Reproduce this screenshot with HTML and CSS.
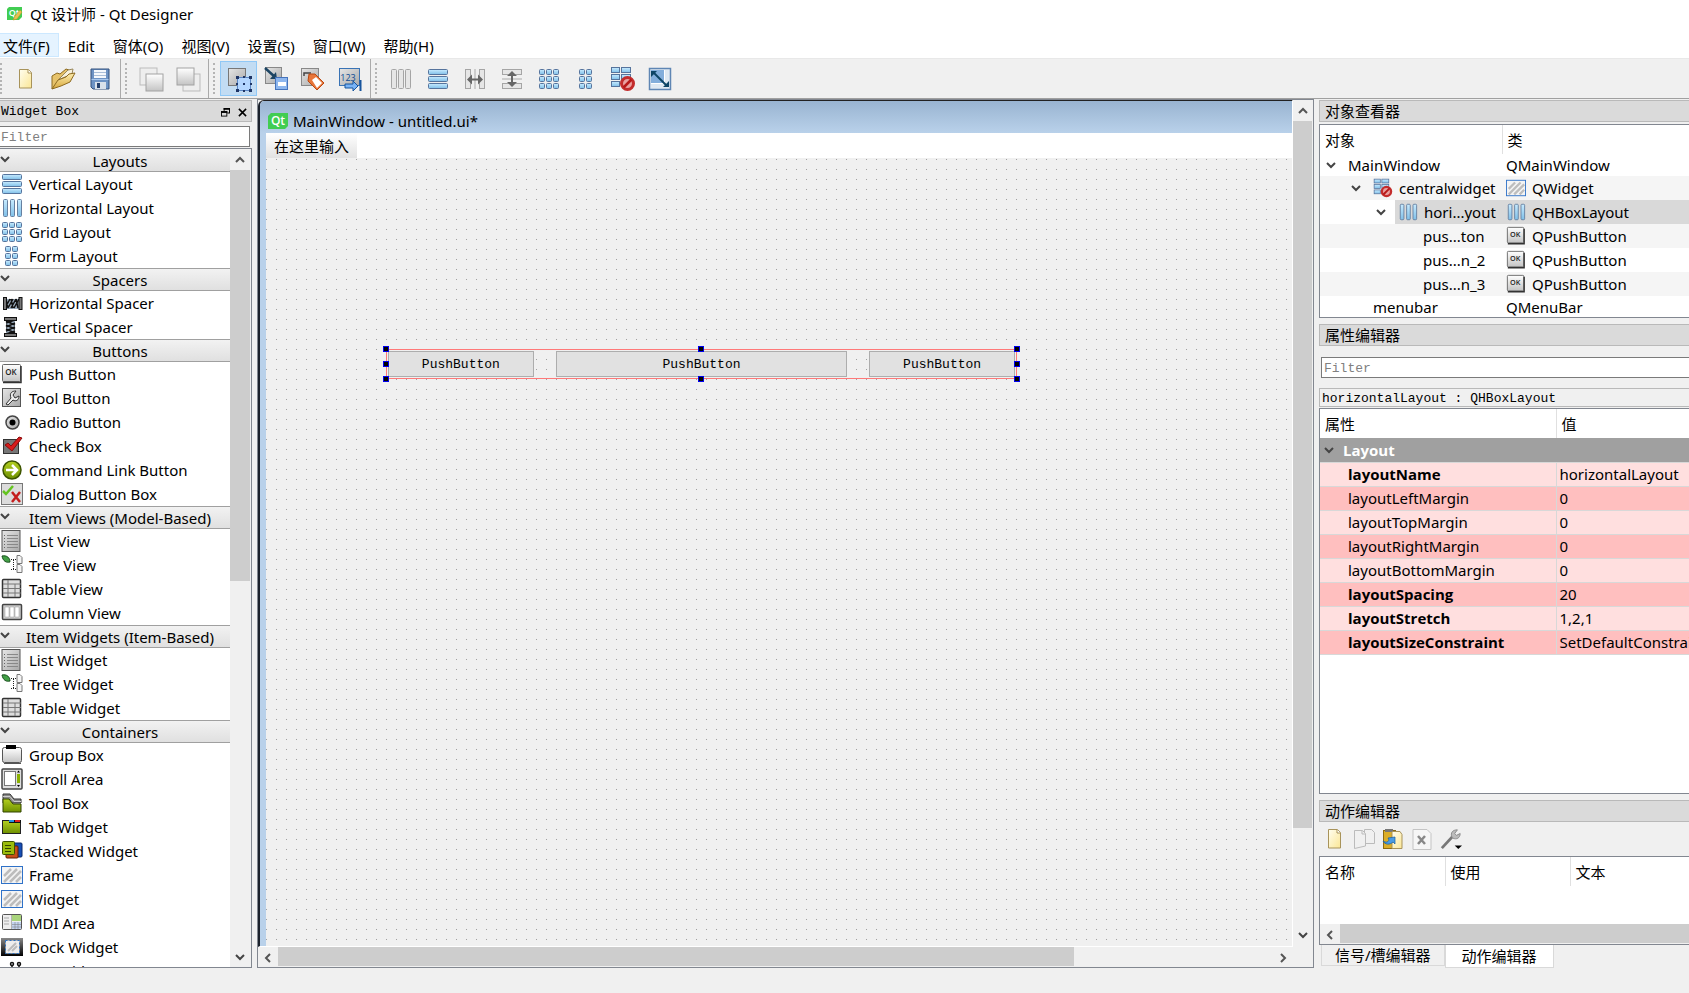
FILE: index.html
```html
<!DOCTYPE html>
<html lang="zh-CN">
<head>
    <meta charset="UTF-8">
    <meta name="viewport" content="width=device-width, initial-scale=1.0">
    <title>Qt 设计师 - Qt Designer</title>
    <link rel="stylesheet" href="styles.css">
</head>
<body>
    <!-- icon sprite -->
    <svg class="sprite" aria-hidden="true">
        <defs>
            <linearGradient id="blue" x1="0" y1="0" x2="0" y2="1"><stop offset="0" stop-color="#c8ebff"/><stop offset="1" stop-color="#7fbfe8"/></linearGradient>
            <linearGradient id="gray" x1="0" y1="0" x2="1" y2="1"><stop offset="0" stop-color="#e6e6e6"/><stop offset="1" stop-color="#a8a8a8"/></linearGradient>
            <linearGradient id="light" x1="0" y1="0" x2="0" y2="1"><stop offset="0" stop-color="#ffffff"/><stop offset="1" stop-color="#c4c4c4"/></linearGradient>
            <linearGradient id="paper" x1="0" y1="0" x2="1" y2="1"><stop offset="0" stop-color="#fffef0"/><stop offset="1" stop-color="#fbe695"/></linearGradient>
            <linearGradient id="gold" x1="0" y1="0" x2="0" y2="1"><stop offset="0" stop-color="#fdeeb0"/><stop offset="1" stop-color="#d8a83c"/></linearGradient>
            <linearGradient id="green" x1="0" y1="0" x2="0" y2="1"><stop offset="0" stop-color="#b4d020"/><stop offset="1" stop-color="#6e9000"/></linearGradient>
            <linearGradient id="dark" x1="0" y1="0" x2="0" y2="1"><stop offset="0" stop-color="#888"/><stop offset="1" stop-color="#000"/></linearGradient>
        </defs>
        <symbol id="down" viewBox="0 0 12 12"><path d="M2 4l4 4 4-4" fill="none" stroke="#444" stroke-width="2"/></symbol>
        <symbol id="up" viewBox="0 0 12 12"><path d="M2 8l4-4 4 4" fill="none" stroke="#555" stroke-width="2"/></symbol>
        <symbol id="left" viewBox="0 0 12 12"><path d="M8 2L4 6l4 4" fill="none" stroke="#555" stroke-width="2"/></symbol>
        <symbol id="right" viewBox="0 0 12 12"><path d="M4 2l4 4-4 4" fill="none" stroke="#555" stroke-width="2"/></symbol>
        <symbol id="new" viewBox="0 0 22 22"><path d="M4.500 1.500h9l3 3v15.500h-12z" fill="url(#paper)" stroke="#a8935a"/><path d="M13 1.500v3.500h3.500" fill="#fff" stroke="#a8935a"/></symbol>
        <symbol id="open" viewBox="0 0 26 24"><path d="M2 22V9l5-3 3 1 6-5 3 1v5" fill="#e6c26a" stroke="#8d6a20"/><path d="M8 13L18 3l5-1-1 5z" fill="#f6f0dc" stroke="#99875a"/><path d="M2 22l6-9 8-3 3-3 6-1-5 9-9 4z" fill="url(#gold)" stroke="#8d6a20"/></symbol>
        <symbol id="save" viewBox="0 0 22 22"><path d="M2 1h18v20H4l-2-2z" fill="#6d93c4" stroke="#33507c"/><rect x="5" y="2" width="12" height="8" fill="#f4f8fc"/><path d="M5 4.500h12M5 7.500h12" stroke="#a9bed8"/><rect x="6" y="14" width="11" height="7" fill="#d9e1ea"/><rect x="8" y="15" width="3" height="5" fill="#233f6c"/><path d="M2.500 11.500h17" stroke="#a8c8ee"/></symbol>
        <symbol id="front" viewBox="0 0 26 26"><rect x="2" y="2" width="17" height="17" fill="#eee" stroke="#bbb"/><rect x="8" y="8" width="17" height="17" fill="url(#light)" stroke="#a2a2a2"/></symbol>
        <symbol id="back" viewBox="0 0 26 26"><rect x="8" y="8" width="17" height="17" fill="#eee" stroke="#bbb"/><rect x="2" y="2" width="17" height="17" fill="url(#light)" stroke="#a2a2a2"/></symbol>
        <symbol id="edit-widgets" viewBox="0 0 26 26"><rect x="2.500" y="2.500" width="17" height="17" fill="url(#gray)" stroke="#777"/><rect x="11.500" y="11.500" width="13" height="13" fill="#b4d6ff" stroke="#5b86c4"/><path d="M10 10h3v3h-3zM17 10h2v2h-2zM23 10h3v3h-3zM10 17h2v2h-2zM24 17h2v2h-2zM10 23h3v3h-3zM17 24h2v2h-2zM23 23h3v3h-3zM17 17h2v2h-2z" fill="#1f3565"/></symbol>
        <symbol id="edit-signals" viewBox="0 0 26 26"><rect x="2.500" y="1.500" width="16" height="16" fill="url(#gray)" stroke="#888"/><path d="M2 2l10 9" stroke="#1d4563" stroke-width="2.500"/><path d="M14 13H7l6-7z" fill="#1d4563"/><rect x="12.500" y="11.500" width="12" height="12" fill="#8db6ee" stroke="#4573bb"/><rect x="15" y="16" width="8" height="4" fill="#fff"/></symbol>
        <symbol id="edit-buddies" viewBox="0 0 26 26"><rect x="1.500" y="2.500" width="17" height="17" fill="url(#gray)" stroke="#888"/><path d="M4 10V7h7" fill="none" stroke="#444" stroke-width="1.500"/><path d="M9 8h6l9 9-7 7-9-9z" fill="#e8763a" stroke="#ba4912"/><path d="M12 14l4-3 6 6-5 5z" fill="#fff"/></symbol>
        <symbol id="edit-tab" viewBox="0 0 26 26"><rect x="2.500" y="2.500" width="20" height="17" fill="url(#gray)" stroke="#3973b5"/><path d="M8 18h8v-3l5 5-5 5v-3H8z" fill="#79b3f5" stroke="#17549d"/><path d="M23.500 14v11" stroke="#17549d" stroke-width="2"/></symbol>
        <symbol id="hlay" viewBox="0 0 22 22"><g fill="url(#blue)" stroke="#6680a0"><rect x="2.500" y="2.500" width="4" height="17" rx="1"/><rect x="9.500" y="2.500" width="4" height="17" rx="1"/><rect x="16.500" y="2.500" width="4" height="17" rx="1"/></g></symbol>
        <symbol id="hlay-off" viewBox="0 0 22 22"><g fill="#e6e6e6" stroke="#a5a5a5"><rect x="1.500" y="1.500" width="5" height="19" rx="1"/><rect x="8.500" y="1.500" width="5" height="19" rx="1"/><rect x="15.500" y="1.500" width="5" height="19" rx="1"/></g></symbol>
        <symbol id="vlay" viewBox="0 0 22 22"><g fill="url(#blue)" stroke="#56749d"><rect x="1.500" y="1.500" width="19" height="5" rx="1"/><rect x="1.500" y="8.500" width="19" height="5" rx="1"/><rect x="1.500" y="15.500" width="19" height="5" rx="1"/></g></symbol>
        <symbol id="hsplit" viewBox="0 0 22 22"><g fill="#e6e6e6" stroke="#a5a5a5"><rect x="1.500" y="1.500" width="5" height="19"/><rect x="15.500" y="1.500" width="5" height="19"/></g><path d="M11 1v20" stroke="#aaa"/><path d="M3 11.500l5-5v4h6v-4l5 5-5 5v-4H8v4z" fill="#666"/></symbol>
        <symbol id="vsplit" viewBox="0 0 22 22"><g fill="#e6e6e6" stroke="#a5a5a5"><rect x="1.500" y="1.500" width="19" height="5"/><rect x="1.500" y="15.500" width="19" height="5"/></g><path d="M1 11h20" stroke="#aaa"/><path d="M11 3l5 5h-4v6h4l-5 5-5-5h4V8H6z" fill="#666"/></symbol>
        <symbol id="grid" viewBox="0 0 22 22"><g fill="url(#blue)" stroke="#56749d"><rect x="1.500" y="1.500" width="5" height="5" rx="1"/><rect x="8.500" y="1.500" width="5" height="5" rx="1"/><rect x="15.500" y="1.500" width="5" height="5" rx="1"/><rect x="1.500" y="8.500" width="5" height="5" rx="1"/><rect x="8.500" y="8.500" width="5" height="5" rx="1"/><rect x="15.500" y="8.500" width="5" height="5" rx="1"/><rect x="1.500" y="15.500" width="5" height="5" rx="1"/><rect x="8.500" y="15.500" width="5" height="5" rx="1"/><rect x="15.500" y="15.500" width="5" height="5" rx="1"/></g></symbol>
        <symbol id="form" viewBox="0 0 22 22"><g fill="url(#blue)" stroke="#56749d"><rect x="4.500" y="1.500" width="5" height="5" rx="1"/><rect x="11.500" y="1.500" width="5" height="5" rx="1"/><rect x="4.500" y="8.500" width="5" height="5" rx="1"/><rect x="11.500" y="8.500" width="5" height="5" rx="1"/><rect x="4.500" y="15.500" width="5" height="5" rx="1"/><rect x="11.500" y="15.500" width="5" height="5" rx="1"/></g></symbol>
        <symbol id="break" viewBox="0 0 26 26"><g fill="url(#blue)" stroke="#56749d"><rect x="1.500" y="1.500" width="8" height="5"/><rect x="11.500" y="1.500" width="9" height="5"/><rect x="1.500" y="8.500" width="8" height="5"/><rect x="11.500" y="8.500" width="9" height="5"/><rect x="1.500" y="15.500" width="8" height="5"/></g><circle cx="17.500" cy="17.500" r="6" fill="#e9a0a0" stroke="#c32c2c" stroke-width="3"/><path d="M13.500 21.500l8-8" stroke="#b81818" stroke-width="2.500"/></symbol>
        <symbol id="adjust" viewBox="0 0 26 26"><rect x="2.500" y="2.500" width="21" height="21" fill="#dfe9f2" stroke="#5f86b4" stroke-width="1.500"/><rect x="4" y="4" width="13" height="13" fill="#83aedb"/><path d="M17.500 4v13.500H4" fill="none" stroke="#fff"/><path d="M7 7l13 13" stroke="#0d4565" stroke-width="2"/><path d="M4 5h6l-6 6zM22 21h-6l6-6z" fill="#0d4565"/></symbol>
        <symbol id="hspace" viewBox="0 0 22 22"><path d="M4 7h14v10H4z" fill="#9ab"/><path d="M4 16l5-9M7 16l5-9M10 16l5-9M13 16l5-9M5 7l2 9M10 7l2 9M15 7l2 9" fill="none" stroke="#111" stroke-width="1.500"/><rect x="2.500" y="5.500" width="3" height="12" fill="#777" stroke="#111"/><rect x="18" y="5.500" width="3" height="12" fill="#777" stroke="#111"/></symbol>
        <symbol id="vspace" viewBox="0 0 22 22"><path d="M5 4h9v14H5z" fill="#9ab"/><path d="M5 7l9-3M5 11l9-4M5 15l9-4M5 18l9-3M5 5l9 4M5 9l9 4M5 13l9 4" fill="none" stroke="#111" stroke-width="1.500"/><rect x="3.500" y="1.500" width="12" height="3" fill="#777" stroke="#111"/><rect x="3.500" y="17.500" width="12" height="3" fill="#777" stroke="#111"/></symbol>
        <symbol id="ok" viewBox="0 0 22 22"><rect x="1.500" y="1.500" width="18" height="17" rx="1" fill="url(#light)" stroke="#666"/><path d="M2 19.500h18V3" fill="none" stroke="#333" stroke-width="1.500"/></symbol>
        <symbol id="tool" viewBox="0 0 22 22"><rect x="1.500" y="1.500" width="18" height="18" fill="url(#gray)" stroke="#555"/><path d="M5 17l5-6c-2-5 1-7 5-7l-3 4 2 3 4-2c0 4-3 6-6 4l-5 5z" fill="#eee" stroke="#333"/></symbol>
        <symbol id="radio" viewBox="0 0 22 22"><circle cx="11.500" cy="11.500" r="6.500" fill="url(#gray)" stroke="#444" stroke-width="1.500"/><circle cx="11.500" cy="11.500" r="3"/></symbol>
        <symbol id="check" viewBox="0 0 22 22"><rect x="2.500" y="4.500" width="15" height="14" fill="#777" stroke="#333"/><path d="M4 10l3-2 3 3 8-9 3 1-10 13z" fill="#d81c1c" stroke="#8b0b0b"/></symbol>
        <symbol id="command" viewBox="0 0 22 22"><circle cx="11" cy="11" r="9" fill="url(#green)" stroke="#3d5400" stroke-width="1.500"/><path d="M5 11h11M11 6l5 5-5 5" fill="none" stroke="#fff" stroke-width="2.500"/></symbol>
        <symbol id="dialog" viewBox="0 0 22 22"><rect x=".5" y=".5" width="21" height="21" fill="#dcdcdc" stroke="#777"/><path d="M2 8l3 3 7-8" fill="none" stroke="#64c420" stroke-width="2.500"/><path d="M11 9l8 10M19 9l-8 10" stroke="#c41d1d" stroke-width="2.500"/></symbol>
        <symbol id="list" viewBox="0 0 22 22"><rect x="1" y=".5" width="18" height="21" fill="url(#gray)" stroke="#555"/><path d="M6 5.500h11M6 8.500h11M6 11.500h11M6 14.500h11M6 17.500h11" stroke="#888"/><path d="M3.500 5v14" stroke="#666" stroke-dasharray="1 2"/></symbol>
        <symbol id="tree" viewBox="0 0 22 22"><path d="M1 2c5-1 8 2 8 6-4 1-7-1-8-6z" fill="#43a047" stroke="#164d1a"/><path d="M10 5.500h5M12.500 6v9M10 15.500h5" stroke="#222" stroke-dasharray="1 1"/><g fill="#f4f4f4" stroke="#777"><path d="M16 1.500h3l2 2v6h-5zM16 10.500h3l2 2v6h-5z"/></g></symbol>
        <symbol id="table" viewBox="0 0 22 22"><rect x="1.500" y="1.500" width="18" height="18" rx="1" fill="#ddd" stroke="#333" stroke-width="1.500"/><path d="M2 6h18M2 10.500h18M2 15h18M7 2v17M14 6v13" stroke="#777"/></symbol>
        <symbol id="column" viewBox="0 0 22 22"><rect x="1.500" y="2.500" width="19" height="15" rx="1" fill="#ccc" stroke="#444" stroke-width="1.500"/><path d="M4 5h4v10H4zM9 5h4v10H9zM14 5h4v10h-4z" fill="#fff" stroke="#999" stroke-width=".5"/></symbol>
        <symbol id="group" viewBox="0 0 22 22"><rect x="1.500" y="3.500" width="19" height="15" rx="2" fill="url(#light)" stroke="#555"/><rect x="5" y="1" width="10" height="4"/><path d="M3 19.500h17" stroke="#555"/></symbol>
        <symbol id="scroll" viewBox="0 0 22 22"><rect x="1" y="1" width="20" height="20" rx="1" fill="#ddd" stroke="#444" stroke-width="1.500"/><rect x="3.500" y="3.500" width="11" height="14" fill="#fff" stroke="#777"/><rect x="16" y="6" width="3" height="9" fill="#8ab000"/><path d="M16 4.500l1.500-2 1.500 2zM16 17l1.500 2 1.500-2z"/></symbol>
        <symbol id="toolbox" viewBox="0 0 22 22"><path d="M2 2h7l4 5h7v4H2z" fill="#888" stroke="#333"/><path d="M2 4.500h7l4 5h7" fill="none" stroke="#ccc"/><path d="M2 7h6l4 5h8v8H2z" fill="url(#green)" stroke="#334500"/></symbol>
        <symbol id="tab" viewBox="0 0 22 22"><rect x="1.500" y="4.500" width="18" height="13" fill="url(#green)" stroke="#222"/><path d="M8 4h12v3H8z" fill="#111"/><rect x="8" y="4" width="5" height="2" fill="#2294e8"/><rect x="14" y="4" width="5" height="2" fill="#e02222"/></symbol>
        <symbol id="stacked" viewBox="0 0 22 22"><rect x="9" y="3" width="12" height="14" rx="1" fill="#174fb5" stroke="#0a2868"/><rect x="5" y="6" width="12" height="12" rx="1" fill="#c8501a" stroke="#622000"/><rect x="1.500" y="1.500" width="12" height="13" rx="1" fill="#9bbc0c" stroke="#3c5200"/><path d="M4 5.500h6M4 8.500h6M4 11.500h6" stroke="#344700"/></symbol>
        <symbol id="frame" viewBox="0 0 22 22"><rect x=".5" y="2.500" width="21" height="17" fill="#f4f4f4" stroke="#2f72c8"/><path d="M3 12l7-7M3 18L16 5M9 18L20 7M15 18l5-5" stroke="#bdbdbd" stroke-width="2.500"/></symbol>
        <symbol id="mdi" viewBox="0 0 22 22"><rect x="1.500" y="2.500" width="19" height="15" rx="1" fill="#eee" stroke="#555"/><path d="M3 6h5M3 9h5M3 12h5" stroke="#aaa"/><path d="M11 3h9v6h-9z" fill="#a9d47c"/><path d="M11 10h9v7h-9z" fill="#c3d4ef"/><path d="M11 12.500h9M11 15h9M14 10v7M17 10v7M10.500 3v14" stroke="#777" stroke-width=".5"/></symbol>
        <symbol id="dock" viewBox="0 0 22 22"><rect x="0" y="2" width="22" height="18" fill="url(#dark)"/><rect x="4.500" y="4.500" width="14" height="13" fill="#eee" stroke="#2d72c2" stroke-dasharray="2 2"/><path d="M7 15l8-8M11 15l5-5" stroke="#bbb" stroke-width="2"/></symbol>
        <symbol id="ax" viewBox="0 0 22 22"><g fill="none" stroke="#111" stroke-width="1.500"><circle cx="11" cy="4" r="1.500"/><circle cx="18" cy="4" r="1.500"/><path d="M11 6v12M18 6v12"/></g></symbol>
        <symbol id="copy" viewBox="0 0 22 22"><g fill="#f0f0f0" stroke="#bbb"><path d="M11.500 1.500h7l3 3v11h-10z"/><path d="M1.500 2.500h8l3 3V18l-11 2.500z"/><path d="M9 3v3h3" fill="none"/></g></symbol>
        <symbol id="paste" viewBox="0 0 22 22"><rect x="1.500" y="2.500" width="12" height="18" fill="#dcae27" stroke="#8c6a12"/><rect x="3" y="1" width="8" height="3" fill="#777"/><path d="M10 3.500h8l2 3v14H10z" fill="url(#paper)" stroke="#a8935a"/><path d="M1 13c3 2 5 1 6-1l-1-2 7-1v7l-2-2c-3 3-8 3-10-1z" fill="#4a9be4" stroke="#165b9e" stroke-width=".7"/></symbol>
        <symbol id="delete" viewBox="0 0 22 22"><path d="M2 1.500h14l4 4v16H2z" fill="#f6f6f6" stroke="#c4c4c4"/><path d="M7 8l7 8M14 8l-7 8" stroke="#888" stroke-width="2.500"/></symbol>
        <symbol id="wrench" viewBox="0 0 24 22"><path d="M2 21L14 8" stroke="#777" stroke-width="3"/><path d="M13 9c-2-5 1-8 6-8l-3 4 2 2 4-2c0 5-4 7-8 5z" fill="#bbb" stroke="#888"/><path d="M16 18h8l-4 4z"/></symbol>
        <symbol id="float" viewBox="0 0 10 10"><path d="M3.500 3V.5h6v5H7" fill="none" stroke="#000" stroke-width="1.200"/><path d="M3 1h7" stroke="#000" stroke-width="2"/><rect x=".5" y="4" width="6" height="5" fill="none" stroke="#000"/><path d="M0 4.500h7" stroke="#000" stroke-width="2"/></symbol>
        <symbol id="close" viewBox="0 0 10 10"><path d="M1 1l8 8M9 1L1 9" stroke="#000" stroke-width="1.700"/></symbol>
    </svg>

    <header class="titlebar">
        <svg class="app-icon" viewBox="0 0 18 18"><path d="M3 2h13v10l-3 3H1V4z" fill="#41cd52"/><text class="icon-text white" x="8" y="11" font-size="9">Qt</text><path d="M7 15l2-4 5-6 2 2-5 7z" fill="#e8c050" stroke="#b98b20" stroke-width=".5"/></svg>
        <span>Qt 设计师 - Qt Designer</span>
    </header>
    <nav class="menubar">
        <button class="active">文件(F)</button>
        <button>Edit</button>
        <button>窗体(O)</button>
        <button>视图(V)</button>
        <button>设置(S)</button>
        <button>窗口(W)</button>
        <button>帮助(H)</button>
    </nav>
    <div class="toolbar">
        <div class="tools first">
            <button aria-label="New"><svg><use href="#new"/></svg></button>
            <button aria-label="Open"><svg class="big"><use href="#open"/></svg></button>
            <button aria-label="Save"><svg><use href="#save"/></svg></button>
        </div>
        <div class="tools">
            <button aria-label="Bring to front"><svg class="big"><use href="#front"/></svg></button>
            <button aria-label="Send to back"><svg class="big"><use href="#back"/></svg></button>
        </div>
        <div class="tools">
            <button class="on" aria-label="Edit widgets"><svg class="big"><use href="#edit-widgets"/></svg></button>
            <button aria-label="Edit signals"><svg class="big"><use href="#edit-signals"/></svg></button>
            <button aria-label="Edit buddies"><svg class="big"><use href="#edit-buddies"/></svg></button>
            <button aria-label="Edit tab order"><svg class="big" viewBox="0 0 26 26"><use href="#edit-tab"/><text class="icon-text navy" x="11" y="15" font-size="9">123</text></svg></button>
        </div>
        <div class="tools last">
            <button aria-label="Lay out horizontally"><svg><use href="#hlay-off"/></svg></button>
            <button aria-label="Lay out vertically"><svg><use href="#vlay"/></svg></button>
            <button aria-label="Horizontal splitter"><svg><use href="#hsplit"/></svg></button>
            <button aria-label="Vertical splitter"><svg><use href="#vsplit"/></svg></button>
            <button aria-label="Grid layout"><svg><use href="#grid"/></svg></button>
            <button aria-label="Form layout"><svg><use href="#form"/></svg></button>
            <button aria-label="Break layout"><svg class="big"><use href="#break"/></svg></button>
            <button aria-label="Adjust size"><svg class="big"><use href="#adjust"/></svg></button>
        </div>
    </div>

    <main class="workspace">
        <aside class="widget-box">
            <div class="dock-title mono">
                <span>Widget Box</span>
                <button aria-label="Float"><svg><use href="#float"/></svg></button>
                <button aria-label="Close"><svg><use href="#close"/></svg></button>
            </div>
            <input class="filter mono" type="text" placeholder="Filter" aria-label="Filter widgets">
            <div class="widget-scroll">
                <div class="widget-list">
                    <button class="category"><svg><use href="#down"/></svg>Layouts</button>
                    <ul>
                        <li><svg><use href="#vlay"/></svg>Vertical Layout</li>
                        <li><svg><use href="#hlay"/></svg>Horizontal Layout</li>
                        <li><svg><use href="#grid"/></svg>Grid Layout</li>
                        <li><svg><use href="#form"/></svg>Form Layout</li>
                    </ul>
                    <button class="category"><svg><use href="#down"/></svg>Spacers</button>
                    <ul>
                        <li><svg><use href="#hspace"/></svg>Horizontal Spacer</li>
                        <li><svg><use href="#vspace"/></svg>Vertical Spacer</li>
                    </ul>
                    <button class="category"><svg><use href="#down"/></svg>Buttons</button>
                    <ul>
                        <li><svg viewBox="0 0 22 22"><use href="#ok"/><text class="icon-text" x="10" y="12" font-size="8">OK</text></svg>Push Button</li>
                        <li><svg><use href="#tool"/></svg>Tool Button</li>
                        <li><svg><use href="#radio"/></svg>Radio Button</li>
                        <li><svg><use href="#check"/></svg>Check Box</li>
                        <li><svg><use href="#command"/></svg>Command Link Button</li>
                        <li><svg><use href="#dialog"/></svg>Dialog Button Box</li>
                    </ul>
                    <button class="category"><svg><use href="#down"/></svg>Item Views (Model-Based)</button>
                    <ul>
                        <li><svg><use href="#list"/></svg>List View</li>
                        <li><svg><use href="#tree"/></svg>Tree View</li>
                        <li><svg><use href="#table"/></svg>Table View</li>
                        <li><svg><use href="#column"/></svg>Column View</li>
                    </ul>
                    <button class="category"><svg><use href="#down"/></svg>Item Widgets (Item-Based)</button>
                    <ul>
                        <li><svg><use href="#list"/></svg>List Widget</li>
                        <li><svg><use href="#tree"/></svg>Tree Widget</li>
                        <li><svg><use href="#table"/></svg>Table Widget</li>
                    </ul>
                    <button class="category"><svg><use href="#down"/></svg>Containers</button>
                    <ul>
                        <li><svg><use href="#group"/></svg>Group Box</li>
                        <li><svg><use href="#scroll"/></svg>Scroll Area</li>
                        <li><svg><use href="#toolbox"/></svg>Tool Box</li>
                        <li><svg><use href="#tab"/></svg>Tab Widget</li>
                        <li><svg><use href="#stacked"/></svg>Stacked Widget</li>
                        <li><svg><use href="#frame"/></svg>Frame</li>
                        <li><svg><use href="#frame"/></svg>Widget</li>
                        <li><svg><use href="#mdi"/></svg>MDI Area</li>
                        <li><svg><use href="#dock"/></svg>Dock Widget</li>
                        <li><svg><use href="#ax"/></svg>QAxWidget</li>
                    </ul>
                </div>
                <div class="vscroll">
                    <button aria-label="Scroll up"><svg><use href="#up"/></svg></button>
                    <div class="track"><div class="thumb" style="height: 53%"></div></div>
                    <button aria-label="Scroll down"><svg><use href="#down"/></svg></button>
                </div>
            </div>
        </aside>

        <section class="mdi-area">
            <div class="form-window">
                <div class="form-title">
                    <svg viewBox="0 0 20 16"><path d="M3 0h17v13l-3 3H0V3z" fill="#41cd52"/><text class="icon-text white" x="10" y="12" font-size="12">Qt</text></svg>
                    <span>MainWindow - untitled.ui*</span>
                </div>
                <div class="form-body">
                    <div class="form-menu"><button>在这里输入</button></div>
                    <div class="canvas">
                        <div class="hbox">
                            <button class="push mono">PushButton</button>
                            <button class="push mono">PushButton</button>
                            <button class="push mono">PushButton</button>
                            <i class="handle top left"></i>
                            <i class="handle top center"></i>
                            <i class="handle top right"></i>
                            <i class="handle middle left"></i>
                            <i class="handle middle right"></i>
                            <i class="handle bottom left"></i>
                            <i class="handle bottom center"></i>
                            <i class="handle bottom right"></i>
                        </div>
                    </div>
                </div>
            </div>
            <div class="vscroll">
                <button aria-label="Scroll up"><svg><use href="#up"/></svg></button>
                <div class="track"><div class="thumb" style="height: 88%"></div></div>
                <button aria-label="Scroll down"><svg><use href="#down"/></svg></button>
            </div>
            <div class="hscroll">
                <button aria-label="Scroll left"><svg><use href="#left"/></svg></button>
                <div class="track"><div class="thumb" style="width: 80%"></div></div>
                <button aria-label="Scroll right"><svg><use href="#right"/></svg></button>
            </div>
        </section>

        <aside class="right-dock">
            <div class="dock-title">对象查看器</div>
            <div class="view object-view">
                <table>
                    <thead>
                        <tr><th>对象</th><th>类</th></tr>
                    </thead>
                    <tbody>
                        <tr class="plain">
                            <td><div class="cell depth-1"><svg class="twisty"><use href="#down"/></svg><span class="node">MainWindow</span></div></td>
                            <td>QMainWindow</td>
                        </tr>
                        <tr class="alt">
                            <td><div class="cell depth-2"><svg class="twisty"><use href="#down"/></svg><span class="node"><svg><use href="#break"/></svg>centralwidget</span></div></td>
                            <td><div class="cell"><svg><use href="#frame"/></svg>QWidget</div></td>
                        </tr>
                        <tr class="selected">
                            <td><div class="cell depth-3"><svg class="twisty"><use href="#down"/></svg><span class="node"><svg><use href="#hlay"/></svg>hori...yout</span></div></td>
                            <td><div class="cell"><svg><use href="#hlay"/></svg>QHBoxLayout</div></td>
                        </tr>
                        <tr class="alt">
                            <td><div class="cell depth-5"><span class="node">pus...ton</span></div></td>
                            <td><div class="cell"><svg viewBox="0 0 22 22"><use href="#ok"/><text class="icon-text" x="10" y="12" font-size="8">OK</text></svg>QPushButton</div></td>
                        </tr>
                        <tr>
                            <td><div class="cell depth-5"><span class="node">pus...n_2</span></div></td>
                            <td><div class="cell"><svg viewBox="0 0 22 22"><use href="#ok"/><text class="icon-text" x="10" y="12" font-size="8">OK</text></svg>QPushButton</div></td>
                        </tr>
                        <tr class="alt">
                            <td><div class="cell depth-5"><span class="node">pus...n_3</span></div></td>
                            <td><div class="cell"><svg viewBox="0 0 22 22"><use href="#ok"/><text class="icon-text" x="10" y="12" font-size="8">OK</text></svg>QPushButton</div></td>
                        </tr>
                        <tr class="plain">
                            <td><div class="cell depth-3"><span class="node">menubar</span></div></td>
                            <td>QMenuBar</td>
                        </tr>
                    </tbody>
                </table>
            </div>

            <div class="dock-title spaced">属性编辑器</div>
            <input class="filter prop-filter mono" type="text" placeholder="Filter" aria-label="Filter properties">
            <div class="object-name mono">horizontalLayout : QHBoxLayout</div>
            <div class="view prop-view">
                <table>
                    <thead>
                        <tr><th>属性</th><th>值</th></tr>
                    </thead>
                    <tbody>
                        <tr class="group"><td colspan="2"><svg><use href="#down"/></svg>Layout</td></tr>
                        <tr class="changed"><td>layoutName</td><td>horizontalLayout</td></tr>
                        <tr><td>layoutLeftMargin</td><td>0</td></tr>
                        <tr><td>layoutTopMargin</td><td>0</td></tr>
                        <tr><td>layoutRightMargin</td><td>0</td></tr>
                        <tr><td>layoutBottomMargin</td><td>0</td></tr>
                        <tr class="changed"><td>layoutSpacing</td><td>20</td></tr>
                        <tr class="changed"><td>layoutStretch</td><td>1,2,1</td></tr>
                        <tr class="changed"><td>layoutSizeConstraint</td><td>SetDefaultConstraint</td></tr>
                    </tbody>
                </table>
            </div>

            <div class="dock-title spaced">动作编辑器</div>
            <div class="action-tools">
                <button aria-label="New action"><svg><use href="#new"/></svg></button>
                <button aria-label="Copy"><svg><use href="#copy"/></svg></button>
                <button aria-label="Paste"><svg><use href="#paste"/></svg></button>
                <button aria-label="Delete"><svg><use href="#delete"/></svg></button>
                <button aria-label="Configure"><svg><use href="#wrench"/></svg></button>
            </div>
            <div class="view action-view">
                <table>
                    <thead>
                        <tr><th>名称</th><th>使用</th><th>文本</th></tr>
                    </thead>
                </table>
                <div class="hscroll">
                    <button aria-label="Scroll left"><svg><use href="#left"/></svg></button>
                    <div class="track"><div class="thumb"></div></div>
                </div>
            </div>
            <div class="tabs">
                <button>信号/槽编辑器</button>
                <button class="current">动作编辑器</button>
            </div>
        </aside>
    </main>
    <footer class="statusbar"></footer>
</body>
</html>
```
FILE: styles.css
```css
* { box-sizing: border-box; }
body {
    display: flex;
    flex-direction: column;
    height: 100vh;
    margin: 0;
    overflow: hidden;
    background: #f0f0f0;
    color: #000;
    font: 15px/20px "Noto Sans", "Noto Sans CJK SC", sans-serif;
    white-space: nowrap;
}
button { padding: 0; border: 0; background: none; color: inherit; font: inherit; }
ul { margin: 0; padding: 0; list-style: none; }
table { width: 100%; border-collapse: collapse; table-layout: fixed; }
th, td { padding: 0; font-weight: normal; text-align: left; }
svg { flex: none; display: block; }
.sprite { position: absolute; width: 0; height: 0; }
.mono { font: 13px/20px "Liberation Mono", "Noto Sans CJK SC", monospace; }
.icon-text { font-family: "Open Sans", sans-serif; font-weight: 600; text-anchor: middle; fill: #222; }
.icon-text.white { fill: #fff; }
.icon-text.navy { fill: #0c4b94; font-weight: normal; }

/* title, menu and tool bars */
.titlebar { display: flex; align-items: center; gap: 6px; height: 33px; padding: 0 6px 6px; background: #fff; }
.app-icon { width: 18px; height: 18px; }
.menubar { display: flex; height: 26px; padding-bottom: 1px; background: #fff; border-bottom: 1px solid #e8e8e8; }
.menubar button { padding: 1px 8px 0; border: 1px solid transparent; }
.menubar .active { padding: 1px 8px 0 3px; background: #e5f3ff; border-color: #cce8ff; border-left: 0; }
.toolbar { display: flex; height: 40px; border-bottom: 1px solid #a0a0a0; }
.tools { display: flex; align-items: center; padding: 0 2px 0 11px; border-right: 1px solid #aaa; position: relative; }
.tools::before { content: ""; position: absolute; left: 4px; top: 4px; bottom: 4px; border-left: 2px dotted #b4b4b4; }
.tools.first { padding-left: 7px; }
.tools.first::before { left: 0; }
.tools.last { border-right: 0; }
.tools button { display: grid; place-items: center; width: 37px; height: 35px; }
.tools .on { background: #c2dcf3; border: 1px solid #90c8f6; }
.tools svg { width: 22px; height: 22px; }
.tools .big { width: 26px; height: 26px; }

.workspace { flex: 1; display: flex; min-height: 0; }
.statusbar { height: 25px; }
.dock-title { display: flex; align-items: center; flex: none; height: 22px; margin-top: 1px; padding-left: 5px; background: #dadada; border: 1px solid #b9b9b9; border-right: 0; }
.dock-title.spaced { margin-top: 6px; }
.filter { height: 21px; padding: 1px 2px 0; border: 1px solid #7a7a7a; border-radius: 0; background: #fff; }
.filter::placeholder { color: #808080; }

/* widget box */
.widget-box { display: flex; flex-direction: column; width: 252px; }
.widget-box .dock-title { gap: 8px; padding: 2px 4px 0 1px; border-left: 0; border-right: 1px solid #b9b9b9; }
.widget-box .dock-title span { flex: 1; }
.widget-box .dock-title svg { width: 9px; height: 9px; }
.widget-box .filter { margin: 4px 2px 1px 0; padding: 1px 1px 0; border-left: 0; }
.widget-scroll { flex: 1; display: flex; min-height: 0; border: 1px solid #828790; border-left: 0; background: #fff; }
.widget-list { flex: 1; overflow: hidden; }
.category { position: relative; display: block; width: 100%; height: 23px; padding-left: 10px; background: linear-gradient(#f2f2f2, #e0e0e0); border-top: 1px solid #a0a0a0; border-bottom: 1px solid #a0a0a0; }
.category:first-child { border-top-color: #f2f2f2; }
.category svg { position: absolute; left: -1px; top: 3px; width: 12px; height: 12px; }
.widget-list li { display: flex; align-items: center; gap: 6px; height: 24px; padding-left: 1px; }
.widget-list li svg { width: 22px; height: 22px; }

/* scroll bars */
.vscroll { display: flex; flex-direction: column; width: 21px; background: #f0f0f0; }
.hscroll { display: flex; height: 20px; background: #f0f0f0; }
.vscroll button, .hscroll button { display: grid; place-items: center; width: 20px; height: 21px; }
.vscroll svg, .hscroll svg { width: 12px; height: 12px; }
.track { flex: 1; }
.thumb { height: 100%; background: #cdcdcd; }
.vscroll .thumb { width: 20px; }
.hscroll .thumb { height: 19px; }

/* form editor */
.mdi-area { flex: 1; display: grid; grid-template: 1fr 20px / 1fr 20px; min-width: 0; margin: 0 5px; border: 1px solid #828790; }
.mdi-area .vscroll { width: 20px; padding-bottom: 2px; }
.mdi-area .vscroll .thumb { width: 19px; }
.form-window { display: flex; flex-direction: column; min-width: 0; border: solid #fff; border-width: 1px 1px 1px 2px; border-top-color: #222; border-left-color: #1c222c; border-top-left-radius: 6px; overflow: hidden; }
.form-title { display: flex; align-items: center; gap: 5px; height: 32px; padding: 8px 8px 0; background: linear-gradient(#99b4d1, #b9d1ea); }
.form-title svg { width: 20px; height: 16px; }
.form-body { flex: 1; display: flex; flex-direction: column; border-left: 6px solid #b9d1ea; }
.form-menu { height: 25px; background: #fff; }
.form-menu button { height: 25px; padding: 0 8px; background: linear-gradient(#fff, #e2e2e2); }
.canvas {
    position: relative;
    flex: 1;
    background: linear-gradient(90deg, transparent 1px, #f0f0f0 1px) 0 1px / 10px 10px, linear-gradient(#a0a0a0 1px, #f0f0f0 1px) 0 1px / 10px 10px;
}
.hbox { position: absolute; left: 120px; top: 191px; display: grid; grid-template-columns: 1fr 2fr 1fr; gap: 22px; width: 631px; height: 30px; padding: 1px; border: 1px solid #ff7878; }
.push { padding-top: 2px; background: #e1e1e1; border: 1px solid #adadad; }
.handle { position: absolute; width: 6px; height: 6px; background: #000; border: 1px solid #0000f0; }
.handle.top { top: -4px; }
.handle.middle { top: 11px; }
.handle.bottom { bottom: -4px; }
.handle.left { left: -4px; }
.handle.center { left: 311px; }
.handle.right { right: -4px; }

/* right docks */
.right-dock { display: flex; flex-direction: column; width: 370px; overflow: hidden; }
.view { overflow: hidden; background: #fff; border: 1px solid #828790; border-right: 0; }
.view th { height: 29px; padding-left: 5px; border-right: 1px solid #e0e0e0; }
.view th:last-child { border-right: 0; }
.object-view { height: 194px; margin-top: 2px; }
.object-view th:first-child { width: 182px; }
.object-view tr { height: 24px; }
.object-view .plain { height: 22px; }
.object-view td:last-child { padding-left: 4px; }
.object-view svg { width: 20px; height: 20px; }
.cell, .node { display: flex; align-items: center; gap: 6px; height: 100%; }
.cell { height: 24px; }
.plain .cell { height: 22px; }
.node { flex: 1; padding-left: 3px; }
td:first-child .cell { gap: 4px; }
.object-view .twisty { width: 12px; height: 12px; margin-right: 4px; }
.depth-1 { padding-left: 5px; }
.depth-2 { padding-left: 30px; }
.depth-3 { padding-left: 50px; }
.depth-5 { padding-left: 100px; }
.selected .cell.depth-3 { padding-left: 55px; }
.alt { background: #f5f5f5; }
.selected .node, .selected td:last-child { background: #d9d9d9; }
.prop-filter { flex: none; margin: 11px 0 10px 2px; border-right: 0; }
.object-name { height: 19px; margin-bottom: 1px; padding-left: 2px; border: 1px solid #b9b9b9; border-right: 0; }
.prop-view { flex: 1; }
.prop-view th:first-child { width: 236px; }
.prop-view td { height: 24px; padding-left: 3px; border-bottom: 1px solid #d8d8d8; }
.prop-view td:first-child { padding-left: 28px; border-right: 1px solid #d8d8d8; }
.prop-view tbody tr { background: #ffbfbf; }
.prop-view tbody tr:nth-child(even) { background: #ffdfdf; }
.prop-view .changed td:first-child, .prop-view .group td { font-family: "Open Sans", sans-serif; font-weight: bold; }
.prop-view tbody .group { background: #a0a0a0; color: #fff; }
.prop-view .group td:first-child { padding-left: 3px; border-right: 0; }
.group svg { display: inline-block; width: 12px; height: 12px; margin-right: 8px; }
.action-tools { display: flex; align-items: center; gap: 7px; height: 34px; padding-left: 5px; }
.action-tools svg { width: 22px; height: 22px; }
.action-view { display: flex; flex-direction: column; justify-content: space-between; height: 89px; }
.action-view th { width: 125px; }
.action-view th:last-child { width: auto; }
.tabs { display: flex; align-items: flex-start; height: 23px; padding-left: 2px; }
.tabs button { height: 21px; padding: 0 13px; border: 1px solid #d9d9d9; border-top: 0; }
.tabs .current { height: 23px; padding: 0 16px; background: #fff; }
```
